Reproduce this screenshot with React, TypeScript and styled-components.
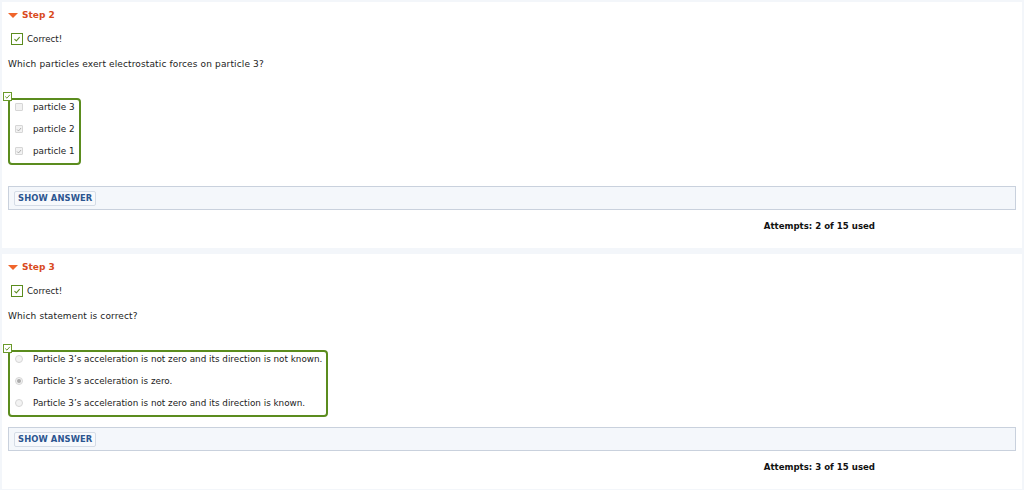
import React from "react";
import styled, { createGlobalStyle } from "styled-components";

const GlobalStyle = createGlobalStyle`
  html, body {
    margin: 0;
    padding: 0;
    background: #f3f6fa;
    font-family: "DejaVu Sans", Verdana, sans-serif;
    color: #222;
  }
  * { box-sizing: border-box; }
`;

const Page = styled.div`
  display: flex;
  flex-direction: column;
  gap: 6px;
  padding: 2px 2px 1px 2px;
  min-height: 490px;
`;

const Panel = styled.section`
  background: #fff;
  display: flex;
  flex-direction: column;
  align-items: flex-start;
  padding: 7px 6px 16px 6px;
`;

const StepHeader = styled.div`
  display: flex;
  align-items: center;
  gap: 4px;
  height: 12px;
  cursor: pointer;
`;

const Triangle = styled.span`
  width: 0;
  height: 0;
  border-left: 5.5px solid transparent;
  border-right: 5.5px solid transparent;
  border-top: 5px solid #f0652b;
  margin-top: 1px;
`;

const StepTitle = styled.span`
  font-size: 9px;
  font-weight: bold;
  color: #d94a1e;
  line-height: 12px;
`;

const CorrectRow = styled.div`
  display: flex;
  align-items: center;
  gap: 4px;
  margin: 12px 0 0 3px;
  height: 12px;
`;

const CorrectBox = styled.span`
  width: 12px;
  height: 12px;
  border: 1px solid #5b8c1e;
  background: #fff;
  display: flex;
  align-items: center;
  justify-content: center;
`;

const BodyText = styled.div<{ $top: number }>`
  font-size: 9px;
  letter-spacing: 0.13px;
  line-height: 12px;
  margin-top: ${(p) => p.$top}px;
  color: #222;
`;

const CorrectText = styled.span`
  font-size: 8.7px;
  line-height: 12px;
  color: #222;
`;

const AnswerGroup = styled.div`
  position: relative;
  margin-top: 28px;
  border: 2px solid #5b8c1e;
  border-radius: 4px;
  padding: 0 4px 5px 5px;
  display: flex;
  flex-direction: column;
  gap: 8px;
`;

const GroupBadge = styled.span`
  position: absolute;
  left: -7px;
  top: -8px;
  width: 9px;
  height: 9px;
  background: #fff;
  border: 1px solid #6a9a2a;
  display: flex;
  align-items: center;
  justify-content: center;
`;

const OptionRow = styled.label`
  display: flex;
  align-items: center;
  gap: 10px;
  height: 14px;
  font-size: 8.8px;
  color: #222;
  white-space: nowrap;
`;

const CheckMark = styled.span<{ $checked: boolean }>`
  width: 8px;
  height: 8px;
  border: 1px solid #d6d6d6;
  border-radius: 1px;
  background: #f2f2f2;
  display: flex;
  align-items: center;
  justify-content: center;
  flex-shrink: 0;
`;

const RadioMark = styled.span<{ $checked: boolean }>`
  width: 8px;
  height: 8px;
  border: 1px solid #d6d6d6;
  border-radius: 50%;
  background: #f3f3f3;
  display: flex;
  align-items: center;
  justify-content: center;
  flex-shrink: 0;
  &::after {
    content: "";
    display: ${(p) => (p.$checked ? "block" : "none")};
    width: 4px;
    height: 4px;
    border-radius: 50%;
    background: #ababab;
  }
`;

const AnswerBar = styled.div<{ $top: number }>`
  align-self: stretch;
  margin-top: ${(p) => p.$top}px;
  background: #f4f7fb;
  border: 1px solid #c9d1dd;
  padding: 4px 5px 3px 5px;
  display: flex;
`;

const ShowAnswerButton = styled.button`
  height: 15px;
  padding: 0 3px;
  font-family: "DejaVu Sans", Verdana, sans-serif;
  font-size: 8.4px;
  font-weight: bold;
  letter-spacing: 0.1px;
  color: #2b5590;
  background: #f7f9fc;
  border: 1px solid #d5dce6;
  border-radius: 2px;
  line-height: 13px;
  cursor: pointer;
`;

const AttemptsRow = styled.div`
  align-self: stretch;
  display: flex;
  justify-content: flex-end;
  margin-top: 10px;
  padding-right: 141px;
  font-size: 8.6px;
  font-weight: bold;
  line-height: 12px;
  color: #111;
`;

const Check = ({ color, size }: { color: string; size: number }) => (
  <svg width={size} height={size} viewBox="0 0 10 10">
    <polyline
      points="2.2,5.4 4.2,7.4 8,3"
      fill="none"
      stroke={color}
      strokeWidth={1.3}
      strokeLinecap="round"
      strokeLinejoin="round"
    />
  </svg>
);

type Option = { label: string; checked: boolean };

const StepPanel = ({
  step,
  question,
  kind,
  options,
  barTop,
  attempts,
}: {
  step: number;
  question: string;
  kind: "check" | "radio";
  options: Option[];
  barTop: number;
  attempts: string;
}) => (
  <Panel>
    <StepHeader>
      <Triangle />
      <StepTitle>Step {step}</StepTitle>
    </StepHeader>
    <CorrectRow>
      <CorrectBox>
        <Check color="#5b8c1e" size={8} />
      </CorrectBox>
      <CorrectText>Correct!</CorrectText>
    </CorrectRow>
    <BodyText $top={13}>{question}</BodyText>
    <AnswerGroup>
      <GroupBadge>
        <Check color="#5b8c1e" size={7} />
      </GroupBadge>
      {options.map((o) => (
        <OptionRow key={o.label}>
          {kind === "check" ? (
            <CheckMark $checked={o.checked}>
              {o.checked && <Check color="#9a9a9a" size={7} />}
            </CheckMark>
          ) : (
            <RadioMark $checked={o.checked} />
          )}
          {o.label}
        </OptionRow>
      ))}
    </AnswerGroup>
    <AnswerBar $top={barTop}>
      <ShowAnswerButton>SHOW ANSWER</ShowAnswerButton>
    </AnswerBar>
    <AttemptsRow>{attempts}</AttemptsRow>
  </Panel>
);

export default function App() {
  return (
    <>
      <GlobalStyle />
      <Page>
        <StepPanel
          step={2}
          question="Which particles exert electrostatic forces on particle 3?"
          kind="check"
          options={[
            { label: "particle 3", checked: false },
            { label: "particle 2", checked: true },
            { label: "particle 1", checked: true },
          ]}
          barTop={21}
          attempts="Attempts: 2 of 15 used"
        />
        <StepPanel
          step={3}
          question="Which statement is correct?"
          kind="radio"
          options={[
            {
              label:
                "Particle 3’s acceleration is not zero and its direction is not known.",
              checked: false,
            },
            { label: "Particle 3’s acceleration is zero.", checked: true },
            {
              label:
                "Particle 3’s acceleration is not zero and its direction is known.",
              checked: false,
            },
          ]}
          barTop={10}
          attempts="Attempts: 3 of 15 used"
        />
      </Page>
    </>
  );
}
